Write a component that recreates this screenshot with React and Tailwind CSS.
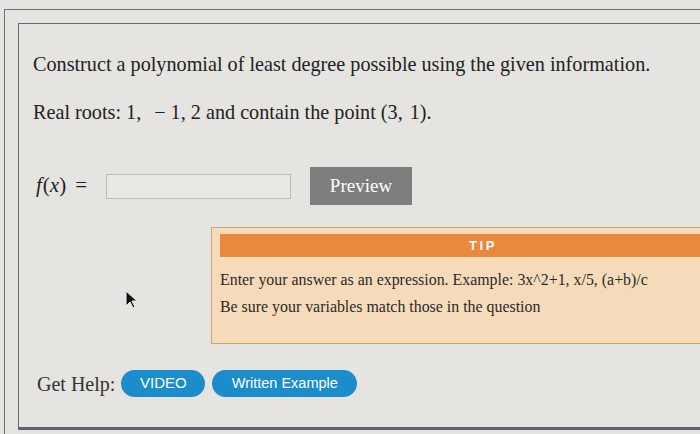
export default function App() {
  const serif = { fontFamily: '"Liberation Serif", "Times New Roman", serif' };
  const sans = { fontFamily: '"Liberation Sans", Arial, sans-serif' };
  return (
    <div className="relative h-[434px] w-[700px] overflow-hidden bg-[#e5e4e0] pl-[4px] pt-[9px]" style={serif}>
      <div className="h-full border-l border-t border-[#707070]">
        <div className="ml-[13px] mt-[13px] flex h-[407px] flex-col border-b-[3px] border-l border-t border-b-[#5d6372] border-l-[#6a6a6a] border-t-[#6a6a6a] pl-[14px] text-[#222]">
          <div className="mt-[26px] text-[20.2px] leading-[28px]">
            Construct a polynomial of least degree possible using the given information.
          </div>
          <div className="mt-[20px] text-[20.2px] leading-[28px]">
            Real roots: 1,<span className="ml-[13px]">−</span><span className="ml-[5px]">1, 2</span> and contain the point (3,<span className="ml-[7px]">1</span>).
          </div>
          <div className="mt-[41px] flex h-[38px] items-center">
            <div className="ml-[3px] flex w-[70px] items-center text-[21px]">
              <i className="mr-[1px]">f</i>(<i>x</i>)<span className="ml-[9px]">=</span>
            </div>
            <div className="h-[25px] w-[185px] border border-[#bdbcb8] bg-[#e9e8e4]"></div>
            <div className="ml-[19px] flex h-[38px] w-[102px] items-center justify-center bg-[#7e7e7e] text-[19px] text-white">
              Preview
            </div>
          </div>
          <div className="ml-[178px] mt-[22px] h-[117px] w-[600px] border border-[#d3a07a] bg-[#f6dbba] pl-[8px] pt-[6px]">
            <div className="flex h-[23px] w-[526px] items-center justify-center bg-[#e8893f] text-[13px] font-bold tracking-[0.2em] text-white" style={sans}>
              TIP
            </div>
            <div className="mt-[9px] text-[15.9px] leading-[27px] text-[#2a2a2a]">
              Enter your answer as an expression. Example: 3x^2+1, x/5, (a+b)/c
            </div>
            <div className="text-[15.9px] leading-[27px] text-[#2a2a2a]">
              Be sure your variables match those in the question
            </div>
          </div>
          <div className="mt-[26px] flex h-[27px] items-center">
            <span className="ml-[4px] text-[20px] text-[#333]">Get Help:</span>
            <span className="ml-[6px] flex h-[27px] w-[84px] items-center justify-center rounded-full bg-[#1b8dcb] text-[15px] text-white" style={sans}>VIDEO</span>
            <span className="ml-[7px] flex h-[27px] w-[145px] items-center justify-center rounded-full bg-[#1b8dcb] text-[14.5px] text-white" style={sans}>Written Example</span>
          </div>
        </div>
      </div>
      <svg className="absolute left-[124px] top-[290px]" width="16" height="20" viewBox="0 0 16 20">
        <path d="M2 1 L2 16 L6 12 L9 18 L11 17 L8 11 L13 11 Z" fill="#111" stroke="#f4f4f4" strokeWidth="1" />
      </svg>
    </div>
  );
}
